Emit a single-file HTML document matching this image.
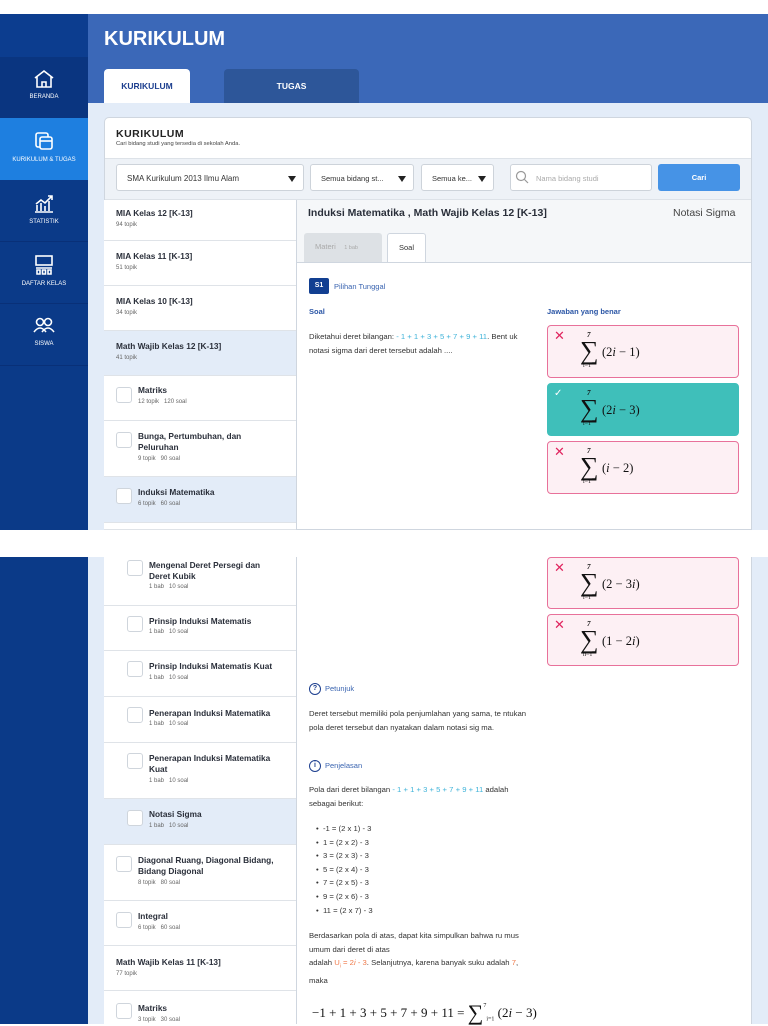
<!DOCTYPE html>
<html><head><meta charset="utf-8"><style>
*{margin:0;padding:0;box-sizing:border-box}
body{width:768px;height:1024px;background:#fff;position:relative;overflow:hidden;font-family:"Liberation Sans",sans-serif;color:#333}
.a{position:absolute}
.ni{position:absolute;left:0;width:88px;height:62px;border-bottom:1px solid #093078;color:#fff;text-align:center;font-size:6px}
.ni svg{display:block;margin:12px auto 5px}
.row{position:absolute;left:104px;width:192px;border-bottom:1px solid #dfe3e8;background:#fff}
.row b{position:absolute;font-size:8.3px;color:#2a2f3a;line-height:11px}
.row i{position:absolute;font-style:normal;font-size:6px;color:#666}
.cb{position:absolute;width:16px;height:16px;border:1px solid #cfd5dc;border-radius:3px;background:#fff}
.sel{position:absolute;top:164px;height:27px;border:1px solid #cdd3da;border-radius:3px;background:#fff;font-size:7.5px;color:#333;padding:9px 0 0 10px}
.dd:after{content:"";position:absolute;right:7px;top:11px;border:4px solid transparent;border-top:6px solid #222;border-bottom:0}
.ans{position:absolute;left:547px;width:192px;height:53px;border:1.5px solid #e8719a;border-radius:4px;background:#fdf0f4}
.ans .x{position:absolute;left:6px;top:2px;color:#e0245e;font-size:13px}
.sig{position:absolute;left:32px;top:5px;font-family:"Liberation Serif",serif;color:#111}
.sig .s{position:absolute;left:0;top:8px;font-size:26px;line-height:24px}
.sig .t{position:absolute;left:7px;top:0;font-size:7px;font-style:italic;font-weight:bold}
.sig .b{position:absolute;left:3px;top:32px;font-size:6px}
.sig .e{position:absolute;left:22px;top:14px;font-size:12.5px;white-space:nowrap}
.p{position:absolute;left:309px;font-size:7.7px;line-height:14px;color:#333;width:224px}
.c{color:#3fb3d9}
.o{color:#f07a4a}
.h{position:absolute;left:309px;font-size:7.5px;color:#3a64b0}
.h span{display:inline-block;width:12px;height:12px;border:1.6px solid #1d3f8f;border-radius:50%;text-align:center;font-size:7px;line-height:9px;color:#1d3f8f;font-weight:bold;margin-right:4px;vertical-align:middle}
</style></head><body>

<div class="a" style="left:0;top:14px;width:88px;height:516px;background:#0b3a88"></div>
<div class="a" style="left:0;top:14px;width:88px;height:43px;background:#0c3d8f"></div>
<div class="ni" style="top:57px;background:#0a3580"><svg width="22" height="20" viewBox="0 0 22 20" fill="none" stroke="#fff" stroke-width="1.6"><path d="M2 9 L11 2 L20 9 M4 8 V18 H18 V8 M9 18 V13 H13 V18"/></svg>BERANDA</div>
<div class="ni" style="top:118px;background:#1e7fe0;border:0"><svg width="22" height="22" viewBox="0 0 22 22" fill="none" stroke="#fff" stroke-width="1.6"><rect x="3" y="3" width="12" height="14" rx="2"/><rect x="7" y="7" width="12" height="12" rx="2" fill="#1e7fe0"/><path d="M7 11 H19"/></svg>KURIKULUM &amp; TUGAS</div>
<div class="ni" style="top:180px"><svg width="22" height="22" viewBox="0 0 22 22" fill="none" stroke="#fff" stroke-width="1.6"><path d="M2 20 H20 M4 19 V13 M8 19 V11 M12 19 V14 M16 19 V9 M3 12 L8 8 L12 11 L19 4 M15 4 H19 V8"/></svg>STATISTIK</div>
<div class="ni" style="top:242px"><svg width="22" height="22" viewBox="0 0 22 22" fill="none" stroke="#fff" stroke-width="1.6"><rect x="3" y="2" width="16" height="9"/><path d="M3 14 H19 M4 16 h3 v4 h-3z M9.5 16 h3 v4 h-3z M15 16 h3 v4 h-3z"/></svg>DAFTAR KELAS</div>
<div class="ni" style="top:304px"><svg width="22" height="20" viewBox="0 0 22 20" fill="none" stroke="#fff" stroke-width="1.6"><circle cx="7" cy="6" r="3.5"/><circle cx="15" cy="6" r="3.5"/><path d="M1 16 Q7 8 13 16 M9 16 Q15 8 21 16"/></svg>SISWA</div>

<div class="a" style="left:88px;top:14px;width:680px;height:89px;background:#3b68b8"></div>
<div class="a" style="left:104px;top:28px;font-size:20px;font-weight:bold;color:#fff">KURIKULUM</div>
<div class="a" style="left:104px;top:69px;width:86px;height:34px;background:#fff;border-radius:4px 4px 0 0;font-size:8.5px;font-weight:bold;color:#1d3f8f;text-align:center;line-height:34px">KURIKULUM</div>
<div class="a" style="left:224px;top:69px;width:135px;height:34px;background:#2d5699;border-radius:4px 4px 0 0;font-size:8.5px;font-weight:bold;color:#fff;text-align:center;line-height:34px">TUGAS</div>
<div class="a" style="left:88px;top:103px;width:680px;height:427px;background:#e3ecf8"></div>

<div class="a" style="left:104px;top:117px;width:648px;height:413px;background:#fff;border:1px solid #cfd6df;border-radius:5px 5px 0 0"></div>
<div class="a" style="left:116px;top:128px;font-size:10.5px;font-weight:bold;color:#222;letter-spacing:.5px">KURIKULUM</div>
<div class="a" style="left:116px;top:141px;font-size:5.8px;color:#444">Cari bidang studi yang tersedia di sekolah Anda.</div>
<div class="a" style="left:105px;top:158px;width:646px;height:42px;background:#eef2f7;border-top:1px solid #dde2e8;border-bottom:1px solid #dde2e8"></div>
<div class="sel dd" style="left:116px;width:188px;font-size:8px">SMA Kurikulum 2013 Ilmu Alam</div>
<div class="sel dd" style="left:310px;width:104px">Semua bidang st...</div>
<div class="sel dd" style="left:421px;width:73px">Semua ke...</div>
<div class="sel" style="left:510px;width:142px;color:#aaa;padding-left:25px">Nama bidang studi</div>
<svg class="a" style="left:515px;top:170px" width="14" height="14" viewBox="0 0 14 14" fill="none" stroke="#999" stroke-width="1.2"><circle cx="6" cy="6" r="4.5"/><path d="M9.5 9.5 L13 13"/></svg>
<div class="a" style="left:658px;top:164px;width:82px;height:27px;background:#4693e6;border-radius:3px;color:#fff;font-size:7.5px;font-weight:bold;text-align:center;line-height:27px">Cari</div>

<div class="row" style="top:200px;height:41px"><b style="left:12px;top:8px">MIA Kelas 12 [K-13]</b><i style="left:12px;top:22px">94 topik</i></div>
<div class="row" style="top:241px;height:45px"><b style="left:12px;top:10px">MIA Kelas 11 [K-13]</b><i style="left:12px;top:24px">51 topik</i></div>
<div class="row" style="top:286px;height:45px"><b style="left:12px;top:10px">MIA Kelas 10 [K-13]</b><i style="left:12px;top:24px">34 topik</i></div>
<div class="row" style="top:331px;height:45px;background:#e3ecf8"><b style="left:12px;top:10px">Math Wajib Kelas 12 [K-13]</b><i style="left:12px;top:24px">41 topik</i></div>
<div class="row" style="top:376px;height:45px"><div class="cb" style="left:12px;top:11px"></div><b style="left:34px;top:9px">Matriks</b><i style="left:34px;top:23px">12 topik &nbsp; 120 soal</i></div>
<div class="row" style="top:421px;height:56px"><div class="cb" style="left:12px;top:11px"></div><b style="left:34px;top:10px;width:130px">Bunga, Pertumbuhan, dan Peluruhan</b><i style="left:34px;top:35px">9 topik &nbsp; 90 soal</i></div>
<div class="row" style="top:477px;height:46px;background:#e3ecf8"><div class="cb" style="left:12px;top:11px"></div><b style="left:34px;top:10px">Induksi Matematika</b><i style="left:34px;top:24px">6 topik &nbsp; 60 soal</i></div>
<div class="row" style="top:523px;height:7px"></div>
<div class="a" style="left:296px;top:200px;width:1px;height:330px;background:#cfd6df"></div>

<div class="a" style="left:297px;top:200px;width:454px;height:62px;background:#f5f7f9"></div>
<div class="a" style="left:308px;top:207px;font-size:10.5px;font-weight:bold;color:#2a2f3a">Induksi Matematika , Math Wajib Kelas 12 [K-13]</div>
<div class="a" style="left:673px;top:207px;font-size:10.5px;color:#444">Notasi Sigma</div>
<div class="a" style="left:304px;top:233px;width:78px;height:29px;background:#dde1e5;border-radius:3px 3px 0 0;font-size:7.5px;color:#aaa;padding:9px 0 0 11px">Materi &nbsp;&nbsp;&nbsp;<span style="font-size:5.5px">1 bab</span></div>
<div class="a" style="left:387px;top:233px;width:39px;height:30px;background:#fff;border:1px solid #cfd6df;border-bottom:0;border-radius:3px 3px 0 0;font-size:7.5px;color:#333;text-align:center;line-height:27px">Soal</div>
<div class="a" style="left:297px;top:262px;width:454px;height:1px;background:#cfd6df"></div>
<div class="a" style="left:309px;top:278px;width:20px;height:16px;background:#123f91;border-radius:2px;color:#fff;font-size:7px;font-weight:bold;text-align:center;line-height:16px">S1</div>
<div class="a" style="left:334px;top:282px;font-size:7.5px;color:#3a64b0">Pilihan Tunggal</div>
<div class="a" style="left:309px;top:307px;font-size:7.5px;font-weight:bold;color:#2b56a6">Soal</div>
<div class="a" style="left:547px;top:307px;font-size:7.5px;font-weight:bold;color:#2b56a6">Jawaban yang benar</div>
<div class="p" style="top:330px">Diketahui deret bilangan: <span class="c">- 1 + 1 + 3 + 5 + 7 + 9 + 11</span>. Bent uk notasi sigma dari deret tersebut adalah ....</div>

<div class="ans" style="top:325px"><span class="x">✕</span><div class="sig"><span class="t">7</span><span class="s">∑</span><span class="b">i=1</span><span class="e">(2<i>i</i> − 1)</span></div></div>
<div class="ans" style="top:383px;background:#3fbfba;border-color:#3fbfba"><span class="x" style="color:#fff;font-size:10px;top:4px">✓</span><div class="sig"><span class="t">7</span><span class="s">∑</span><span class="b">i=1</span><span class="e">(2<i>i</i> − 3)</span></div></div>
<div class="ans" style="top:441px"><span class="x">✕</span><div class="sig"><span class="t">7</span><span class="s">∑</span><span class="b">i=1</span><span class="e">(<i>i</i> − 2)</span></div></div>

<div class="a" style="left:0;top:557px;width:88px;height:467px;background:#0b3a88"></div>
<div class="a" style="left:88px;top:557px;width:680px;height:467px;background:#e3ecf8"></div>
<div class="a" style="left:104px;top:557px;width:648px;height:467px;background:#fff;border-left:1px solid #cfd6df;border-right:1px solid #cfd6df"></div>
<div class="a" style="left:296px;top:557px;width:1px;height:467px;background:#cfd6df"></div>

<div class="row" style="top:557px;height:49px"><div class="cb" style="left:23px;top:3px"></div><b style="left:45px;top:3px;width:125px">Mengenal Deret Persegi dan Deret Kubik</b><i style="left:45px;top:27px">1 bab &nbsp; 10 soal</i></div>
<div class="row" style="top:606px;height:45px"><div class="cb" style="left:23px;top:10px"></div><b style="left:45px;top:10px">Prinsip Induksi Matematis</b><i style="left:45px;top:23px">1 bab &nbsp; 10 soal</i></div>
<div class="row" style="top:651px;height:46px"><div class="cb" style="left:23px;top:10px"></div><b style="left:45px;top:10px">Prinsip Induksi Matematis Kuat</b><i style="left:45px;top:24px">1 bab &nbsp; 10 soal</i></div>
<div class="row" style="top:697px;height:46px"><div class="cb" style="left:23px;top:10px"></div><b style="left:45px;top:11px">Penerapan Induksi Matematika</b><i style="left:45px;top:24px">1 bab &nbsp; 10 soal</i></div>
<div class="row" style="top:743px;height:56px"><div class="cb" style="left:23px;top:10px"></div><b style="left:45px;top:10px;width:130px">Penerapan Induksi Matematika Kuat</b><i style="left:45px;top:35px">1 bab &nbsp; 10 soal</i></div>
<div class="row" style="top:799px;height:46px;background:#e3ecf8"><div class="cb" style="left:23px;top:11px"></div><b style="left:45px;top:10px">Notasi Sigma</b><i style="left:45px;top:24px">1 bab &nbsp; 10 soal</i></div>
<div class="row" style="top:845px;height:56px"><div class="cb" style="left:12px;top:11px"></div><b style="left:34px;top:10px;width:148px">Diagonal Ruang, Diagonal Bidang, Bidang Diagonal</b><i style="left:34px;top:35px">8 topik &nbsp; 80 soal</i></div>
<div class="row" style="top:901px;height:45px"><div class="cb" style="left:12px;top:11px"></div><b style="left:34px;top:10px">Integral</b><i style="left:34px;top:24px">6 topik &nbsp; 60 soal</i></div>
<div class="row" style="top:946px;height:45px"><b style="left:12px;top:11px">Math Wajib Kelas 11 [K-13]</b><i style="left:12px;top:25px">77 topik</i></div>
<div class="row" style="top:991px;height:33px;border:0"><div class="cb" style="left:12px;top:12px"></div><b style="left:34px;top:12px">Matriks</b><i style="left:34px;top:26px">3 topik &nbsp; 30 soal</i></div>

<div class="ans" style="top:557px;height:52px"><span class="x">✕</span><div class="sig"><span class="t">7</span><span class="s">∑</span><span class="b">i=1</span><span class="e">(2 − 3<i>i</i>)</span></div></div>
<div class="ans" style="top:614px;height:52px"><span class="x">✕</span><div class="sig"><span class="t">7</span><span class="s">∑</span><span class="b">n=1</span><span class="e">(1 − 2<i>i</i>)</span></div></div>

<div class="h" style="top:683px"><span>?</span>Petunjuk</div>
<div class="p" style="top:707px">Deret tersebut memiliki pola penjumlahan yang sama, te ntukan pola deret tersebut dan nyatakan dalam notasi sig ma.</div>
<div class="h" style="top:760px"><span>i</span>Penjelasan</div>
<div class="p" style="top:783px">Pola dari deret bilangan <span class="c">- 1 + 1 + 3 + 5 + 7 + 9 + 11</span> adalah sebagai berikut:</div>
<div class="p" style="top:822px;left:316px;line-height:13.6px">
• &nbsp;-1 = (2 x 1) - 3<br>• &nbsp;1 = (2 x 2) - 3<br>• &nbsp;3 = (2 x 3) - 3<br>• &nbsp;5 = (2 x 4) - 3<br>• &nbsp;7 = (2 x 5) - 3<br>• &nbsp;9 = (2 x 6) - 3<br>• &nbsp;11 = (2 x 7) - 3</div>
<div class="p" style="top:929px;line-height:13.5px">Berdasarkan pola di atas, dapat kita simpulkan bahwa ru mus umum dari deret di atas<br>adalah <span class="o">U<sub style="font-size:5px">i</sub> = 2<i>i</i> - 3</span>. Selanjutnya, karena banyak suku adalah <span class="o">7</span>, maka</div>
<div class="a" style="left:312px;top:1000px;font-family:'Liberation Serif',serif;font-size:13px;color:#111;white-space:nowrap">−1 + 1 + 3 + 5 + 7 + 9 + 11 = <span style="font-size:22px;vertical-align:-3px">∑</span><sup style="font-size:6px;vertical-align:10px">7</sup><sub style="font-size:6px">i=1</sub> (2<i>i</i> − 3)</div>
</body></html>
